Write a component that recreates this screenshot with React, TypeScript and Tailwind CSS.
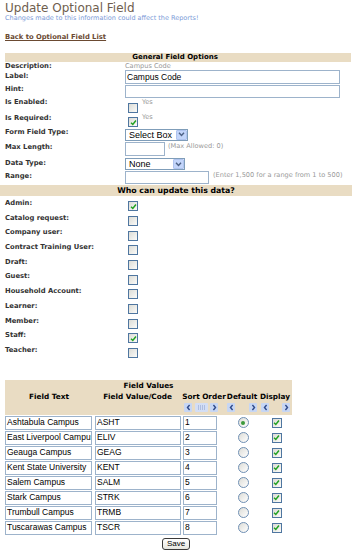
import React from "react";

function Check({ checked }: { checked?: boolean }) {
  return (
    <span className="flex w-[10px] h-[10px] shrink-0 items-center justify-center border border-[#4f76a0] bg-linear-to-br from-[#dcdcd6] to-[#fbfbf9]">
      {checked && (
        <svg viewBox="0 0 8 8" className="w-[7px] h-[7px]">
          <path d="M1.2 4.2 L3.2 6.2 L6.8 1.8" stroke="#21a121" strokeWidth="1.7" fill="none" />
        </svg>
      )}
    </span>
  );
}

function Radio({ checked }: { checked?: boolean }) {
  return (
    <span className="flex w-[11px] h-[11px] items-center justify-center rounded-full border border-[#6f8fb3] bg-linear-to-br from-[#dcdcd7] to-white">
      {checked && <span className="w-[4px] h-[4px] rounded-full bg-[#3c9a3c]" />}
    </span>
  );
}

function Box({ cls, children }: { cls: string; children?: React.ReactNode }) {
  return (
    <div
      className={
        "flex items-center overflow-hidden whitespace-nowrap border border-[#9db3cb] bg-white px-[1px] font-['Liberation_Sans',Arial,sans-serif] text-[8.5px] text-black " +
        cls
      }
    >
      {children}
    </div>
  );
}

function DownBtn() {
  return (
    <span className="flex w-[11px] h-[10px] items-center justify-center rounded-[1px] border border-[#b0c4ef] bg-[#c3d5fa]">
      <svg viewBox="0 0 8 6" className="w-[7px] h-[5px]">
        <path d="M1 1 L4 4.2 L7 1" stroke="#4d6185" strokeWidth="1.7" fill="none" />
      </svg>
    </span>
  );
}

function Select({ cls, text }: { cls: string; text: string }) {
  return (
    <div className={"flex items-center border border-[#7f9db9] bg-white " + cls}>
      <span className="flex-1 pl-[3px] font-['Liberation_Sans',Arial,sans-serif] text-[9px] leading-[10px] text-black whitespace-nowrap">
        {text}
      </span>
      <DownBtn />
    </div>
  );
}

function Arrow({ dir, cls }: { dir: "l" | "r"; cls?: string }) {
  return (
    <span className={"flex w-[8px] h-[9px] items-center justify-center rounded-[1px] bg-[#c6d6f4] " + (cls || "")}>
      <svg viewBox="0 0 6 8" className="w-[5px] h-[7px]">
        {dir === "l" ? (
          <path d="M4.3 1 L1.8 4 L4.3 7" stroke="#2f4a8a" strokeWidth="1.7" fill="none" />
        ) : (
          <path d="M1.7 1 L4.2 4 L1.7 7" stroke="#2f4a8a" strokeWidth="1.7" fill="none" />
        )}
      </svg>
    </span>
  );
}

function Row({ h, pt, label, children }: { h: string; pt: string; label: string; children?: React.ReactNode }) {
  return (
    <div className={"flex items-start " + h}>
      <div className={"w-[120px] shrink-0 text-[6.8px] leading-[9px] font-bold text-[#333] whitespace-nowrap " + pt}>{label}</div>
      <div className="flex items-start">{children}</div>
    </div>
  );
}

const who: [string, boolean][] = [
  ["Admin:", true],
  ["Catalog request:", false],
  ["Company user:", false],
  ["Contract Training User:", false],
  ["Draft:", false],
  ["Guest:", false],
  ["Household Account:", false],
  ["Learner:", false],
  ["Member:", false],
  ["Staff:", true],
  ["Teacher:", false],
];

const values: [string, string, string][] = [
  ["Ashtabula Campus", "ASHT", "1"],
  ["East Liverpool Campus", "ELIV", "2"],
  ["Geauga Campus", "GEAG", "3"],
  ["Kent State University", "KENT", "4"],
  ["Salem Campus", "SALM", "5"],
  ["Stark Campus", "STRK", "6"],
  ["Trumbull Campus", "TRMB", "7"],
  ["Tuscarawas Campus", "TSCR", "8"],
];

export default function App() {
  return (
    <div className="w-[352px] h-[557px] overflow-hidden bg-white font-['DejaVu_Sans',Verdana,sans-serif] text-[#333]">
      <div className="pl-[5px]">
        <div className="pt-[1px] text-[12px] leading-[14px] text-[#6f5e4e] whitespace-nowrap">Update Optional Field</div>
        <div className="-mt-[1px] text-[6.5px] leading-[8px] text-[#7b9bd8] whitespace-nowrap">
          Changes made to this information could affect the Reports!
        </div>
        <div className="mt-[11px] text-[6.8px] leading-[9px] font-bold underline text-[#6b4a32] whitespace-nowrap">
          Back to Optional Field List
        </div>
      </div>

      <div className="mt-[11px] ml-[5px] w-[346px] h-[9px] bg-[#e9dcc3] pr-[6px] text-center text-[7px] leading-[9px] font-bold text-black">
        General Field Options
      </div>

      <div className="pl-[5px]">
        <Row h="h-[8px]" pt="pt-0" label="Description:">
          <span className="text-[6.6px] leading-[9px] text-[#999] whitespace-nowrap">Campus Code</span>
        </Row>
        <Row h="h-[14px]" pt="pt-[2px]" label="Label:">
          <Box cls="w-[215px] h-[14px]">Campus Code</Box>
        </Row>
        <Row h="h-[14px]" pt="pt-[0.5px]" label="Hint:">
          <Box cls="mt-[1px] w-[215px] h-[13px]" />
        </Row>
        <Row h="h-[15px]" pt="pt-0" label="Is Enabled:">
          <span className="ml-[3px] mt-[4.5px]">
            <Check />
          </span>
          <span className="ml-[4px] text-[6.6px] leading-[9px] text-[#999]">Yes</span>
        </Row>
        <Row h="h-[15px]" pt="pt-[0.5px]" label="Is Required:">
          <span className="ml-[3px] mt-[4px]">
            <Check checked />
          </span>
          <span className="ml-[4px] text-[6.6px] leading-[9px] text-[#999]">Yes</span>
        </Row>
        <Row h="h-[13px]" pt="pt-0" label="Form Field Type:">
          <Select cls="mt-[0.5px] w-[63px] h-[12px]" text="Select Box" />
        </Row>
        <Row h="h-[15px]" pt="pt-[1.5px]" label="Max Length:">
          <Box cls="mt-[1px] w-[40px] h-[14px]" />
          <span className="ml-[3px] pt-[1px] text-[6.6px] leading-[9px] text-[#999] whitespace-nowrap">(Max Allowed: 0)</span>
        </Row>
        <Row h="h-[15px]" pt="pt-[3px]" label="Data Type:">
          <Select cls="mt-[2px] w-[60px] h-[12px]" text="None" />
        </Row>
        <Row h="h-[14px]" pt="pt-[0.5px]" label="Range:">
          <Box cls="w-[84px] h-[13px]" />
          <span className="ml-[4px] text-[6.6px] leading-[9px] text-[#999] whitespace-nowrap">
            (Enter 1,500 for a range from 1 to 500)
          </span>
        </Row>
      </div>

      <div className="w-[352px] h-[11px] bg-[#e9dcc3] text-center text-[7.8px] leading-[11px] font-bold text-black">
        Who can update this data?
      </div>

      <div className="pl-[5px]">
        {who.map(([label, checked]) => (
          <div key={label} className="flex items-start h-[14.7px]">
            <div className="w-[123px] shrink-0 text-[6.8px] leading-[14.7px] font-bold text-[#333] whitespace-nowrap">{label}</div>
            <span className="mt-[5.3px]">
              <Check checked={checked} />
            </span>
          </div>
        ))}
      </div>

      <div className="mt-[22px] ml-[5px] w-[287px]">
        <div className="bg-[#e9dcc3] h-[35px] text-black font-bold text-[7.3px] whitespace-nowrap">
          <div className="h-[11px] leading-[11px] text-center">Field Values</div>
          <div className="flex h-[11px] leading-[11px]">
            <div className="w-[88px] text-center">Field Text</div>
            <div className="w-[89px] text-center">Field Value/Code</div>
            <div className="w-[44px] text-center">Sort Order</div>
            <div className="w-[32px] text-center">Default</div>
            <div className="w-[34px] text-center">Display</div>
          </div>
          <div className="flex pt-[1px]">
            <div className="w-[177px]" />
            <div className="w-[44px] flex">
              <Arrow dir="l" cls="ml-[2px]" />
              <span className="ml-[3px] flex w-[13px] h-[9px] items-center justify-center rounded-[1px] bg-[#d3def5]">
                <span className="flex gap-[1px]">
                  <span className="w-[1px] h-[5px] bg-[#aebde0]" />
                  <span className="w-[1px] h-[5px] bg-[#aebde0]" />
                  <span className="w-[1px] h-[5px] bg-[#aebde0]" />
                  <span className="w-[1px] h-[5px] bg-[#aebde0]" />
                </span>
              </span>
              <Arrow dir="r" cls="ml-[2px]" />
            </div>
            <div className="w-[32px] flex justify-between px-[1px]">
              <Arrow dir="l" />
              <Arrow dir="r" />
            </div>
            <div className="w-[34px] flex justify-between pl-[3px] pr-[2px]">
              <Arrow dir="l" />
              <Arrow dir="r" />
            </div>
          </div>
        </div>

        <div className="mt-[1px] flex flex-col gap-[1px]">
          {values.map(([text, code, order], i) => (
            <div key={code} className="flex items-center h-[14px]">
              <div className="w-[88px]">
                <Box cls="w-[87px] h-[14px]">{text}</Box>
              </div>
              <div className="w-[89px] pl-[2px]">
                <Box cls="w-[86px] h-[14px]">{code}</Box>
              </div>
              <div className="w-[44px] pl-[1px]">
                <Box cls="w-[34px] h-[14px]">{order}</Box>
              </div>
              <div className="w-[32px] flex justify-center pl-[2px]">
                <Radio checked={i === 0} />
              </div>
              <div className="w-[34px] flex justify-center pl-[3px]">
                <Check checked />
              </div>
            </div>
          ))}
        </div>
      </div>

      <div className="mt-[3px] flex justify-center">
        <button className="w-[28px] h-[12px] rounded-[3px] border border-[#3a3a3a] bg-linear-to-b from-white to-[#e6e6df] font-['Liberation_Sans',Arial,sans-serif] text-[8px] leading-[10px] text-black p-0">
          Save
        </button>
      </div>
    </div>
  );
}
